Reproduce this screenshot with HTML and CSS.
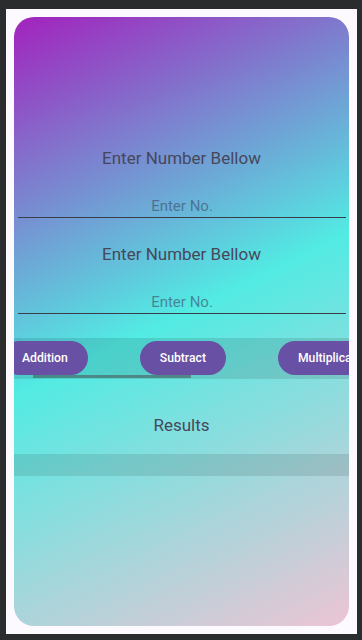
FILE: index.html
```html
<!DOCTYPE html>
<html>
<head>
<meta charset="utf-8">
<link rel="stylesheet" href="styles.css">
</head>
<body>
<div class="screen">
  <div class="card">
    <div class="field first">
      <div class="label">Enter Number Bellow</div>
      <div class="input"><span class="hint">Enter No.</span></div>
    </div>
    <div class="field">
      <div class="label">Enter Number Bellow</div>
      <div class="input"><span class="hint">Enter No.</span></div>
    </div>
    <div class="band">
      <div class="row">
        <span class="btn first-btn">Addition</span>
        <span class="btn">Subtract</span>
        <span class="btn">Multiplication</span>
      </div>
      <div class="thumb"></div>
    </div>
    <div class="results">Results</div>
    <div class="band2"></div>
  </div>
</div>
</body>
</html>
```
FILE: styles.css
```css
html, body {
  margin: 0;
  padding: 0;
  background: #2b2c2e;
}
body {
  width: 362px;
  height: 640px;
  padding: 9px 5px 6px 6px;
  box-sizing: border-box;
  font-family: Roboto, "Noto Sans", sans-serif;
}
.screen {
  background: #fdfaff;
  height: 625px;
  padding: 8px;
  box-sizing: border-box;
}
.card {
  height: 609px;
  border-radius: 20px;
  overflow: hidden;
  background: linear-gradient(154deg, #a222bd 0%, #52ebe3 49%, #edc4d4 100%);
  padding-top: 105px;
  box-sizing: border-box;
}
.field {
  padding-top: 24px;
}
.label {
  text-align: center;
  font-size: 17px;
  line-height: 24px;
  color: #47475a;
}
.input {
  margin: 0 3px 0 4px;
  padding-top: 25px;
  border-bottom: 1px solid #3a3d48;
  text-align: center;
}
.hint {
  display: block;
  font-size: 15px;
  line-height: 22px;
  color: rgba(60, 70, 95, 0.6);
}
.band {
  position: relative;
  margin-top: 24px;
  height: 41px;
  background: rgba(0, 0, 0, 0.11);
  overflow: hidden;
}
.row {
  display: flex;
  gap: 52px;
  padding-top: 3px;
  white-space: nowrap;
}
.btn {
  flex: none;
  height: 34px;
  line-height: 34px;
  padding: 0 20px;
  border-radius: 17px;
  background: #6850a4;
  color: #fff;
  font-size: 12.2px;
  font-weight: 500;
}
.first-btn {
  margin-left: -12px;
}
.thumb {
  position: absolute;
  left: 19px;
  top: 37px;
  width: 158px;
  height: 3px;
  background: rgba(70, 80, 80, 0.55);
}
.results {
  padding: 34px 0 17px;
  text-align: center;
  font-size: 17px;
  line-height: 24px;
  color: #47475a;
}
.band2 {
  height: 22px;
  background: rgba(0, 0, 0, 0.1);
}
```
